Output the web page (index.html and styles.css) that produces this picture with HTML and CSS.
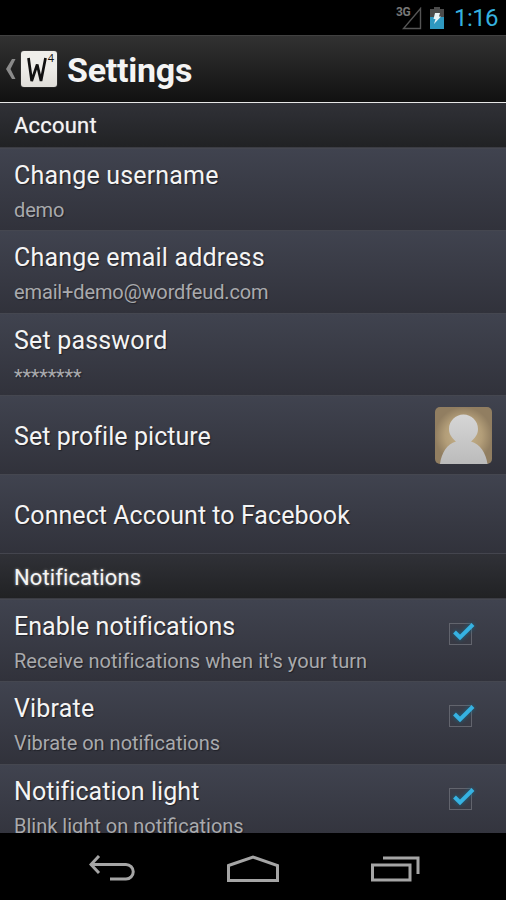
FILE: index.html
```html
<!DOCTYPE html>
<html lang="en">
<head>
<meta charset="utf-8">
<title>Settings</title>
<link rel="stylesheet" href="styles.css">
</head>
<body>
<div class="phone">
  <div class="status">
    <span class="network">3G</span>
    <svg class="signal" width="20" height="23" viewBox="0 0 20 23"><path d="M18.500 1.500V21.500H1.500Z" fill="none" stroke="#555" stroke-width="1.400"/></svg>
    <svg class="battery" width="14" height="22" viewBox="0 0 14 22"><path d="M0 2H4V0H10V2H14V10H0Z" fill="#4b4b4b"/><path d="M0 10H14V22H0Z" fill="#2e98c0"/><path d="M5 6H10L9 9.500H11L4 17L5.500 12H3.500Z" fill="#e8f3f6"/></svg>
    <span class="clock">1:16</span>
  </div>
  <header class="bar">
    <svg class="up" width="10" height="20" viewBox="0 0 10 20"><path d="M6 0H9.500L4.500 10L9.500 20H6L0 10Z" fill="#8a8a8a"/></svg>
    <div class="tile">
      <svg width="36" height="36" viewBox="0 0 36 36"><path d="M7.500 7L10.700 30L16.200 13.500L20 30L24.500 7" fill="none" stroke="#111" stroke-width="2.700" stroke-linejoin="bevel"/></svg>
      <span class="points">4</span>
    </div>
    <h1>Settings</h1>
  </header>
  <main>
    <h2>Account</h2>
    <div class="row"><div><div class="title">Change username</div><div class="sub tight">demo</div></div></div>
    <div class="row"><div><div class="title">Change email address</div><div class="sub tight">email+demo@wordfeud.com</div></div></div>
    <div class="row"><div><div class="title">Set password</div><div class="sub stars">********</div></div></div>
    <div class="row single"><div class="title narrow">Set profile picture</div>
      <svg class="avatar" width="57" height="57" viewBox="0 0 57 57"><defs><radialGradient id="tan"><stop offset="0" stop-color="#c9b68f"/><stop offset=".65" stop-color="#b29d78"/><stop offset="1" stop-color="#917e61"/></radialGradient><linearGradient id="person" x2="0" y2="1"><stop stop-color="#d6d6d6"/><stop offset="1" stop-color="#bbb"/></linearGradient></defs><rect width="57" height="57" rx="5" fill="url(#tan)"/><path d="M28.500 7.500C36.500 7.500 43 14 43 22C43 28 39 32 36 34.500C45 37 51 46 52.500 57H5C6.500 46 12 37 21 34.500C18 32 14 28 14 22C14 14 20.500 7.500 28.500 7.500Z" fill="url(#person)"/></svg>
    </div>
    <div class="row single"><div class="title narrow">Connect Account to Facebook</div></div>
    <h2 class="glow">Notifications</h2>
    <div class="row"><div><div class="title narrow">Enable notifications</div><div class="sub loose">Receive notifications when it's your turn</div></div><svg class="check" width="32" height="30" viewBox="0 0 32 30"><rect x="3.500" y="5.500" width="22" height="21" fill="none" stroke="#62646d"/><path class="tick" d="M8.500 14L14 19.500L27 6.500" fill="none" stroke="#36b2e2" stroke-width="4"/></svg></div>
    <div class="row"><div><div class="title">Vibrate</div><div class="sub">Vibrate on notifications</div></div><svg class="check" width="32" height="30" viewBox="0 0 32 30"><rect x="3.500" y="5.500" width="22" height="21" fill="none" stroke="#62646d"/><path class="tick" d="M8.500 14L14 19.500L27 6.500" fill="none" stroke="#36b2e2" stroke-width="4"/></svg></div>
    <div class="row"><div><div class="title narrow">Notification light</div><div class="sub">Blink light on notifications</div></div><svg class="check" width="32" height="30" viewBox="0 0 32 30"><rect x="3.500" y="5.500" width="22" height="21" fill="none" stroke="#62646d"/><path class="tick" d="M8.500 14L14 19.500L27 6.500" fill="none" stroke="#36b2e2" stroke-width="4"/></svg></div>
  </main>
  <nav>
    <svg width="46" height="28" viewBox="0 0 46 28"><path d="M2 9.500H37A7 7 0 0 1 37 24H21M10 1L2 9.500L10 18" fill="none" stroke="#a5a5a5" stroke-width="3"/></svg>
    <svg width="52" height="28" viewBox="0 0 52 28"><path d="M1.500 10.500L26 2L50.500 10.500V25.500H1.500Z" fill="none" stroke="#a5a5a5" stroke-width="3"/></svg>
    <svg width="49" height="28" viewBox="0 0 49 28"><path d="M1.500 10H39V25H1.500ZM12 3H47V19" fill="none" stroke="#a5a5a5" stroke-width="3"/></svg>
  </nav>
</div>
</body>
</html>
```
FILE: styles.css
```css
* { box-sizing: border-box; }
body { margin: 0; background: #000; font-family: Roboto, sans-serif; color: #f4f4f4; }
.phone { width: 506px; height: 900px; display: flex; flex-direction: column; overflow: hidden; }
.status { height: 35px; flex: none; display: flex; justify-content: flex-end; align-items: flex-start; padding-right: 8px; background: #000; }
.network { font-size: 12px; line-height: 14px; font-weight: 700; color: #777; margin-top: 5px; margin-right: -8px; letter-spacing: -0.5px; }
.signal { margin-top: 7px; }
.battery { margin: 7px 0 0 8px; }
.clock { margin-left: 10px; font-size: 24px; line-height: 36px; font-weight: 400; letter-spacing: -0.6px; color: #35b1df; }
.bar { height: 68px; flex: none; display: flex; align-items: center; padding-left: 6px; border-top: 1px solid #414141; border-bottom: 1px solid #e6e6e6; background: linear-gradient(#323232, #111); }
.tile { position: relative; width: 36px; height: 36px; margin-left: 5px; border-radius: 3px; background: linear-gradient(#efeeea 0 45%, #dfddd8); box-shadow: 0 0 1px #aaa; }
.tile svg { display: block; }
.points { position: absolute; right: 3px; top: 1px; font: 11px/12px "Open Sans", sans-serif; color: #111; }
h1 { margin: 1px 0 0 10px; font-size: 34px; line-height: 40px; font-weight: 700; letter-spacing: -0.25px; }
main { flex: 1; min-height: 0; overflow: hidden; }
h2 { margin: 0; height: 45px; padding: 1px 14px 0; font-size: 22px; line-height: 44px; font-weight: 400; letter-spacing: 0.2px; background: linear-gradient(#303137, #212224); border-bottom: 1px solid #3b3c43; text-shadow: 0 0 1px #aaa; }
.glow { height: 46px; padding-top: 2px; letter-spacing: 0.1px; border-top: 1px solid #44454e; text-shadow: 0 0 3px #999; }
.row { height: 82.350px; display: flex; justify-content: space-between; padding: 12px 14px 0; background: linear-gradient(#40434f, #31323b); border-top: 1px solid #454750; text-shadow: 1px 1px 1px #202128; }
.title { font-size: 25px; line-height: 30px; letter-spacing: 0.18px; white-space: nowrap; }
.narrow { letter-spacing: 0.05px; }
.sub { font-size: 20px; line-height: 24px; margin-top: 7px; color: #a9aaad; white-space: nowrap; }
.tight { letter-spacing: -0.13px; }
.loose { letter-spacing: 0.05px; }
.stars { letter-spacing: -0.2px; padding-top: 2px; }
.single { height: 79px; align-items: center; padding-top: 3px; }
.avatar { margin-top: -3px; }
.check { margin: 6px 14px 0 0; }
.tick { filter: drop-shadow(0 0 2px #176888); }
nav { height: 67px; flex: none; display: flex; justify-content: space-between; padding: 22px 86px 0 89px; background: #000; }
```
